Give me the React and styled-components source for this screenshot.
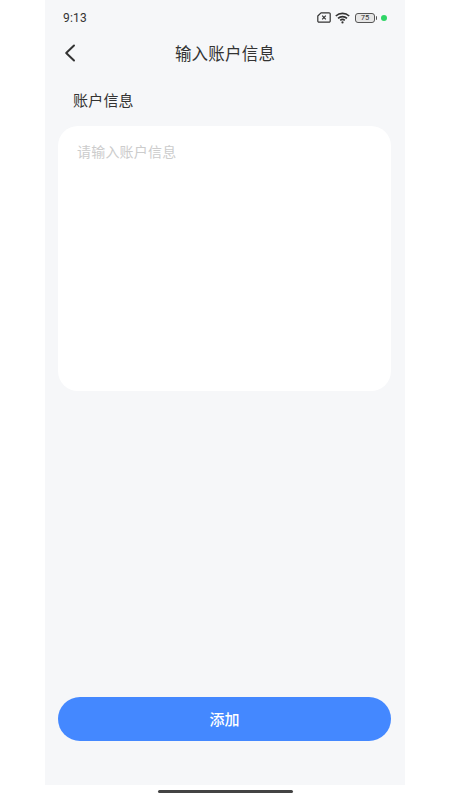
import React, { useState } from "react";
import styled, { createGlobalStyle } from "styled-components";

const GlobalStyle = createGlobalStyle`
  html, body {
    margin: 0;
    padding: 0;
    background: #fff;
    font-family: "Noto Sans", "Noto Sans CJK SC", sans-serif;
  }
  * { box-sizing: border-box; }
`;

const Frame = styled.div`
  width: 450px;
  height: 800px;
  display: flex;
  flex-direction: column;
  align-items: center;
  background: #fff;
`;

const Screen = styled.div`
  width: 360px;
  height: 785px;
  background: #f6f7f9;
  display: flex;
  flex-direction: column;
`;

const StatusBar = styled.div`
  height: 34px;
  padding: 1px 18px 0;
  display: flex;
  align-items: center;
  justify-content: space-between;
`;

const Time = styled.span`
  font-family: Roboto, sans-serif;
  font-size: 12px;
  color: #333;
  letter-spacing: 0.2px;
`;

const StatusIcons = styled.div`
  display: flex;
  align-items: center;
`;

const WifiSvg = styled.svg`
  margin-left: 4px;
`;

const BatteryBody = styled.div`
  width: 20px;
  height: 10px;
  margin: 0 6px 0 5px;
  border: 1px solid #555;
  border-radius: 3px;
  background: #e6e6e6;
  font-family: Roboto, sans-serif;
  font-size: 7.5px;
  line-height: 8px;
  text-align: center;
  color: #333;
  position: relative;
  &::after {
    content: "";
    position: absolute;
    right: -3px;
    top: 2px;
    width: 1.5px;
    height: 4px;
    background: #555;
    border-radius: 0 1px 1px 0;
  }
`;

const Dot = styled.span`
  width: 6px;
  height: 6px;
  border-radius: 50%;
  background: #2fd566;
`;

const NavBar = styled.div`
  height: 38px;
  display: flex;
  align-items: center;
  justify-content: center;
  position: relative;
`;

const BackButton = styled.button`
  position: absolute;
  left: 18px;
  top: 9px;
  padding: 0;
  border: 0;
  background: none;
  display: flex;
`;

const Title = styled.h1`
  margin: 0;
  font-size: 16.5px;
  font-weight: 400;
  color: #333;
  letter-spacing: 0.2px;
`;

const SectionLabel = styled.div`
  margin: 18px 0 0 28px;
  height: 20px;
  line-height: 20px;
  font-size: 15px;
  letter-spacing: 0.2px;
  color: #333;
`;

const InputCard = styled.div`
  margin: 16px 14px 0 13px;
  height: 265px;
  background: #fff;
  border-radius: 20px;
  padding: 16px 19px;
`;

const AccountInput = styled.textarea`
  width: 100%;
  height: 100%;
  padding: 0;
  border: 0;
  outline: 0;
  resize: none;
  background: none;
  font-family: inherit;
  font-size: 14px;
  letter-spacing: 0.2px;
  line-height: 20px;
  color: #333;
  &::placeholder { color: #cccccc; opacity: 1; }
`;

const AddButton = styled.button`
  margin: auto 14px 44px 13px;
  height: 44px;
  padding: 0 0 2px;
  border: 0;
  border-radius: 22px;
  background: #4488ff;
  color: #fff;
  font-family: inherit;
  font-size: 15px;
  font-weight: 500;
`;

const HomeBar = styled.div`
  width: 135px;
  height: 3px;
  margin-top: 5px;
  border-radius: 2px;
  background: #444;
`;

const SimIcon = () => (
  <svg width="14" height="11" viewBox="0 0 14 11" fill="none" stroke="#333" strokeWidth="1.2">
    <path d="M4 .8h8a1.2 1.2 0 0 1 1.2 1.2v7a1.2 1.2 0 0 1-1.2 1.2H2A1.2 1.2 0 0 1 .8 9V4z" strokeLinejoin="round" />
    <path d="M5.2 3.6l3.6 3.8M8.8 3.6L5.2 7.4" />
  </svg>
);

const WifiIcon = () => (
  <WifiSvg width="15" height="12" viewBox="0 0 15 12" fill="none" stroke="#333" strokeWidth="1.6">
    <path d="M.8 4a10 10 0 0 1 13.4 0" />
    <path d="M3 6.3a6.8 6.8 0 0 1 9 0" />
    <path d="M5.2 8.4a3.5 3.5 0 0 1 4.6 0" />
    <circle cx="7.5" cy="10.4" r="1.1" fill="#333" stroke="none" />
  </WifiSvg>
);

const BackIcon = () => (
  <svg width="14" height="20" viewBox="0 0 14 20" fill="none" stroke="#333" strokeWidth="2" strokeLinecap="round" strokeLinejoin="round">
    <path d="M11 2.5L3.2 10l7.8 7.5" />
  </svg>
);

export default function App() {
  const [account, setAccount] = useState("");

  return (
    <Frame>
      <GlobalStyle />
      <Screen>
        <StatusBar>
          <Time>9:13</Time>
          <StatusIcons>
            <SimIcon />
            <WifiIcon />
            <BatteryBody>75</BatteryBody>
            <Dot />
          </StatusIcons>
        </StatusBar>
        <NavBar>
          <BackButton aria-label="返回">
            <BackIcon />
          </BackButton>
          <Title>输入账户信息</Title>
        </NavBar>
        <SectionLabel>账户信息</SectionLabel>
        <InputCard>
          <AccountInput
            placeholder="请输入账户信息"
            value={account}
            onChange={(e) => setAccount(e.target.value)}
          />
        </InputCard>
        <AddButton>添加</AddButton>
      </Screen>
      <HomeBar />
    </Frame>
  );
}
